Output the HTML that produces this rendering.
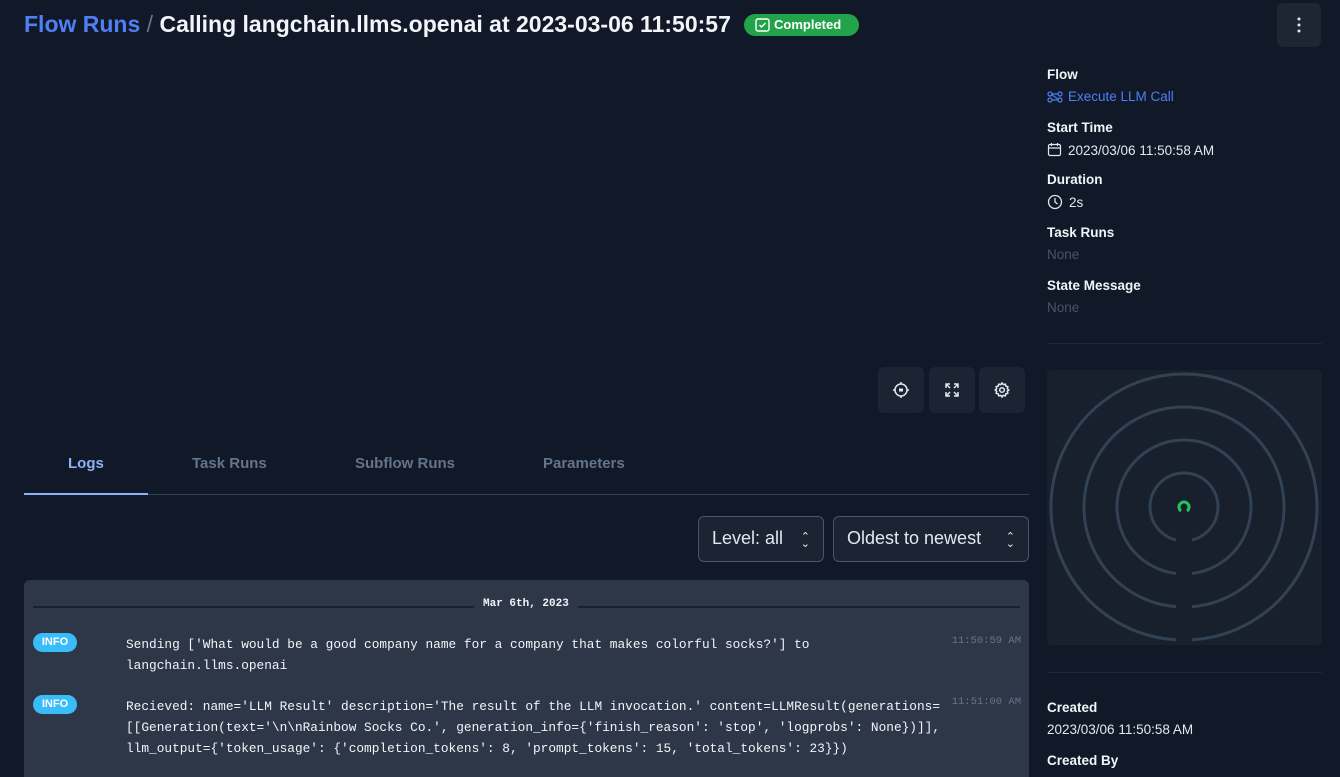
<!DOCTYPE html>
<html><head><meta charset="utf-8"><style>
*{box-sizing:border-box;margin:0;padding:0}
body{width:1340px;height:777px;overflow:hidden;background:#111827;font-family:"Liberation Sans",sans-serif;color:#f1f5f9;position:relative}
.a{position:absolute}
.h1{left:24px;top:11px;font-size:23px;font-weight:bold;letter-spacing:0px;white-space:nowrap}
.badge{left:744px;top:14px;width:115px;height:22px;border-radius:11px;background:#22a34a;color:#fff;font-size:13px;font-weight:bold;padding:3px 0 0 30px}
.menu{left:1277px;top:3px;width:44px;height:44px;border-radius:6px;background:#1e2533}
.lbl{font-size:13.5px;font-weight:bold;color:#f1f5f9;left:1047px}
.val{font-size:13.5px;color:#e2e8f0;left:1047px}
.none{color:#4b5563}
.btn{width:46px;height:46px;border-radius:6px;background:#1c2433;top:367px}
.tab{top:455px;font-size:15px;color:#64748b;font-weight:bold}
.sel{height:46px;top:516px;border:1px solid #4b5563;border-radius:6px;background:#1c2433;font-size:18px;color:#e2e8f0;padding:11px 0 0 13px}
.log{left:24px;top:580px;width:1005px;height:197px;background:#2d3748;border-radius:6px 6px 0 0}
.mono{font-family:"Liberation Mono",monospace;font-size:12.8px;line-height:21px;color:#f1f5f9;white-space:pre}
.info{left:9px;width:44px;height:19px;border-radius:10px;background:#38bdf8;color:#fff;font-size:11px;font-weight:bold;text-align:center;line-height:19px}
.ts{font-family:"Liberation Mono",monospace;font-size:10.5px;color:#64748b;right:8px}
</style></head><body>
<div class="a h1"><span style="color:#4f7ff5">Flow Runs</span> <span style="color:#64748b;font-weight:normal">/</span> Calling langchain.llms.openai at 2023-03-06 11:50:57</div>
<div class="a badge"><svg class="a" style="left:11px;top:4px" width="15" height="14" viewBox="0 0 15 14"><rect x="1" y="1" width="13" height="12" rx="2" fill="none" stroke="#fff" stroke-width="1.4"/><path d="M4.5 7l2 2 4-4" fill="none" stroke="#fff" stroke-width="1.4"/></svg>Completed</div>
<div class="a menu"><svg class="a" style="left:20px;top:14px" width="4" height="16"><circle cx="2" cy="2" r="1.5" fill="#e2e8f0"/><circle cx="2" cy="8" r="1.5" fill="#e2e8f0"/><circle cx="2" cy="14" r="1.5" fill="#e2e8f0"/></svg></div>

<div class="a lbl" style="top:67px">Flow</div>
<div class="a val" style="top:89px;color:#4f7ff5"><svg style="vertical-align:-2px;margin-right:5px" width="16" height="12" viewBox="0 0 16 12" fill="none" stroke="#4f7ff5" stroke-width="1.2"><circle cx="3" cy="3" r="2"/><circle cx="3" cy="9" r="2"/><circle cx="13" cy="3" r="2"/><circle cx="13" cy="9" r="2"/><path d="M5 3h6M5 9h6M5 4l6 4"/></svg>Execute LLM Call</div>
<div class="a lbl" style="top:120px">Start Time</div>
<div class="a val" style="top:142px"><svg style="vertical-align:-2px;margin-right:6px" width="15" height="15" viewBox="0 0 15 15" fill="none" stroke="#e2e8f0" stroke-width="1.2"><rect x="1.5" y="2.5" width="12" height="11" rx="1.5"/><path d="M1.5 6h12M4.5 1v3M10.5 1v3"/></svg>2023/03/06 11:50:58 AM</div>
<div class="a lbl" style="top:172px">Duration</div>
<div class="a val" style="top:194px"><svg style="vertical-align:-3px;margin-right:6px" width="16" height="16" viewBox="0 0 16 16" fill="none" stroke="#e2e8f0" stroke-width="1.3"><circle cx="8" cy="8" r="6.5"/><path d="M8 4v4l2.5 2"/></svg>2s</div>
<div class="a lbl" style="top:225px">Task Runs</div>
<div class="a val none" style="top:247px">None</div>
<div class="a lbl" style="top:278px">State Message</div>
<div class="a val none" style="top:300px">None</div>
<div class="a" style="left:1047px;top:343px;width:275px;height:1px;background:#1f2937"></div>

<div class="a" style="left:1047px;top:370px;width:275px;height:275px;background:#18202d;border-radius:4px">
<svg width="275" height="275" viewBox="0 0 275 275" fill="none" stroke="#334155" stroke-width="3">
<g transform="translate(137,137)">
<path d="M-8 33A34 34 0 1 1 8 33"/>
<path d="M-8 66.5A67 67 0 1 1 8 66.5"/>
<path d="M-8 99.7A100 100 0 1 1 8 99.7"/>
<path d="M-8 132.8A133 133 0 1 1 8 132.8"/>
<path d="M-3 4A5 5 0 1 1 3 4" stroke="#22c55e" stroke-width="3"/>
</g></svg></div>
<div class="a" style="left:1047px;top:672px;width:275px;height:1px;background:#1f2937"></div>
<div class="a lbl" style="top:700px">Created</div>
<div class="a val" style="top:722px">2023/03/06 11:50:58 AM</div>
<div class="a lbl" style="top:753px">Created By</div>

<div class="a btn" style="left:878px"><svg class="a" style="left:14px;top:14px" width="18" height="18" viewBox="0 0 18 18" fill="none" stroke="#e2e8f0" stroke-width="1.5"><circle cx="9" cy="9" r="6"/><path d="M9 1v2M9 15v2M1 9h2M15 9h2"/><rect x="7" y="7.5" width="4" height="3" fill="#e2e8f0" stroke="none"/></svg></div>
<div class="a btn" style="left:929px"><svg class="a" style="left:16px;top:16px" width="14" height="14" viewBox="0 0 14 14" fill="none" stroke="#e2e8f0" stroke-width="1.5"><path d="M1 5V1h4M1 1l4 4M13 5V1H9M13 1l-4 4M1 9v4h4M1 13l4-4M13 9v4H9M13 13l-4-4"/></svg></div>
<div class="a btn" style="left:979px"><svg class="a" style="left:14px;top:14px" width="18" height="18" viewBox="0 0 18 18" fill="none" stroke="#e2e8f0" stroke-width="1.5"><path d="M9 2l1.3 1.6 2-.5.5 2 2 .6-.5 2L15.8 9l-1.5 1.3.5 2-2 .6-.5 2-2-.5L9 16l-1.3-1.6-2 .5-.5-2-2-.6.5-2L2.2 9l1.5-1.3-.5-2 2-.6.5-2 2 .5z"/><circle cx="9" cy="9" r="2.3"/></svg></div>

<div class="a tab" style="left:68px;color:#8fb0f5">Logs</div>
<div class="a tab" style="left:192px">Task Runs</div>
<div class="a tab" style="left:355px">Subflow Runs</div>
<div class="a tab" style="left:543px">Parameters</div>
<div class="a" style="left:24px;top:494px;width:1005px;height:1px;background:#334155"></div>
<div class="a" style="left:24px;top:493px;width:124px;height:2px;background:#8fb0f5"></div>

<div class="a sel" style="left:698px;width:126px">Level: all<span class="a" style="right:13px;top:13px;font-size:11px">⌃</span><span class="a" style="right:13px;top:19px;font-size:11px;transform:scaleY(-1)">⌃</span></div>
<div class="a sel" style="left:833px;width:196px">Oldest to newest<span class="a" style="right:13px;top:13px;font-size:11px">⌃</span><span class="a" style="right:13px;top:19px;font-size:11px;transform:scaleY(-1)">⌃</span></div>

<div class="a log">
<div class="a" style="left:9px;top:26px;width:987px;height:2px;background:#1a202c"></div>
<div class="a" style="left:450px;top:18px;padding:0 9px;background:#2d3748;font-family:'Liberation Mono',monospace;font-size:11px;font-weight:bold;color:#f1f5f9">Mar 6th, 2023</div>
<div class="a info" style="top:53px">INFO</div>
<div class="a mono" style="left:102px;top:54px">Sending ['What would be a good company name for a company that makes colorful socks?'] to
langchain.llms.openai</div>
<div class="a ts" style="top:55px">11:50:59 AM</div>
<div class="a info" style="top:115px">INFO</div>
<div class="a mono" style="left:102px;top:116px">Recieved: name='LLM Result' description='The result of the LLM invocation.' content=LLMResult(generations=
[[Generation(text='\n\nRainbow Socks Co.', generation_info={'finish_reason': 'stop', 'logprobs': None})]],
llm_output={'token_usage': {'completion_tokens': 8, 'prompt_tokens': 15, 'total_tokens': 23}})</div>
<div class="a ts" style="top:116px">11:51:00 AM</div>
</div>
</body></html>
